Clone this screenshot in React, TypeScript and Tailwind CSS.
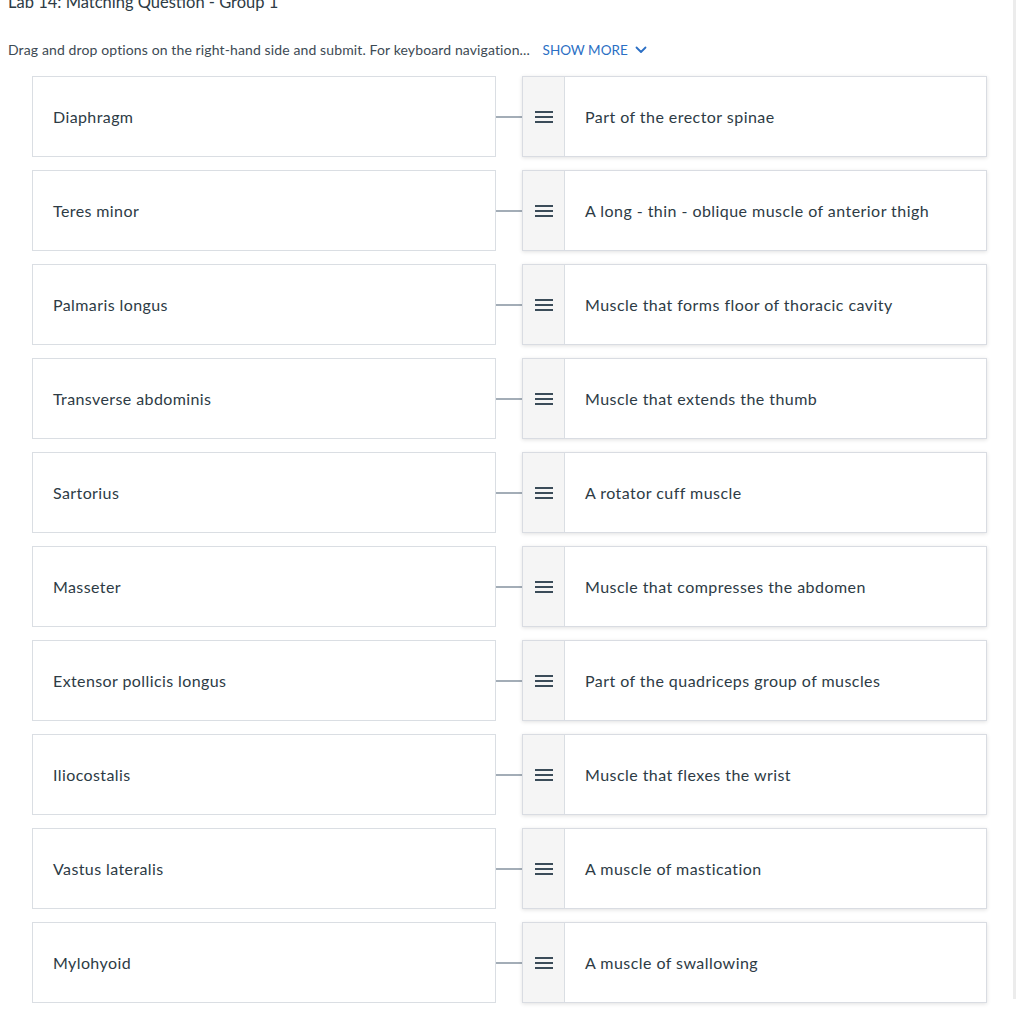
import React from "react";

const pairs: [string, string][] = [
  ["Diaphragm", "Part of the erector spinae"],
  ["Teres minor", "A long - thin - oblique muscle of anterior thigh"],
  ["Palmaris longus", "Muscle that forms floor of thoracic cavity"],
  ["Transverse abdominis", "Muscle that extends the thumb"],
  ["Sartorius", "A rotator cuff muscle"],
  ["Masseter", "Muscle that compresses the abdomen"],
  ["Extensor pollicis longus", "Part of the quadriceps group of muscles"],
  ["Iliocostalis", "Muscle that flexes the wrist"],
  ["Vastus lateralis", "A muscle of mastication"],
  ["Mylohyoid", "A muscle of swallowing"],
];

function Handle() {
  return (
    <svg width="18" height="12" viewBox="0 0 18 12" fill="none">
      <rect x="0" y="0" width="18" height="2" fill="#3b4c59" />
      <rect x="0" y="5" width="18" height="2" fill="#3b4c59" />
      <rect x="0" y="10" width="18" height="2" fill="#3b4c59" />
    </svg>
  );
}

export default function App() {
  return (
    <div
      className="h-[1009px] w-[1024px] overflow-hidden bg-white text-[#2d3b45]"
      style={{ fontFamily: "Lato, 'Open Sans', sans-serif" }}
    >
      <div className="h-full w-[1016px] border-r-[3px] border-[#ececec]">
        <h1 className="-mt-[10px] pl-[8px] text-[16.5px] leading-[24px] text-[#2d3b45]">
          Lab 14: Matching Question - Group 1
        </h1>
        <p className="mt-[26px] pl-[8px] text-[14px] leading-[20px] tracking-[0.12px] text-[#3d4a54]">
          Drag and drop options on the right-hand side and submit. For keyboard navigation...{" "}
          <span className="ml-[9px] inline-flex items-center gap-[7px] text-[13.5px] tracking-normal text-[#2b6fc4]">
            SHOW MORE
            <svg width="12" height="8" viewBox="0 0 12 8" fill="none">
              <path d="M1.5 1.5 6 6l4.5-4.5" stroke="#2b6fc4" strokeWidth="1.8" strokeLinecap="round" strokeLinejoin="round" />
            </svg>
          </span>
        </p>
        <div className="mt-[16px] flex flex-col gap-[13px] pl-[32px]">
          {pairs.map(([left, right]) => (
            <div key={left} className="flex h-[81px] items-center">
              <div className="flex h-full w-[464px] items-center border border-[#dadee3] pl-[20px] text-[16px] tracking-[0.4px]">
                {left}
              </div>
              <div className="h-[2px] w-[26px] bg-[#a3adb7]" />
              <div className="flex h-full w-[465px] border border-[#d9dce2] shadow-[0_1px_4px_rgba(0,0,0,0.12)]">
                <div className="flex w-[42px] items-center justify-center border-r border-[#dadee3] bg-[#f5f5f5]">
                  <Handle />
                </div>
                <div className="flex items-center pl-[20px] text-[16px] tracking-[0.45px]">{right}</div>
              </div>
            </div>
          ))}
        </div>
      </div>
    </div>
  );
}
